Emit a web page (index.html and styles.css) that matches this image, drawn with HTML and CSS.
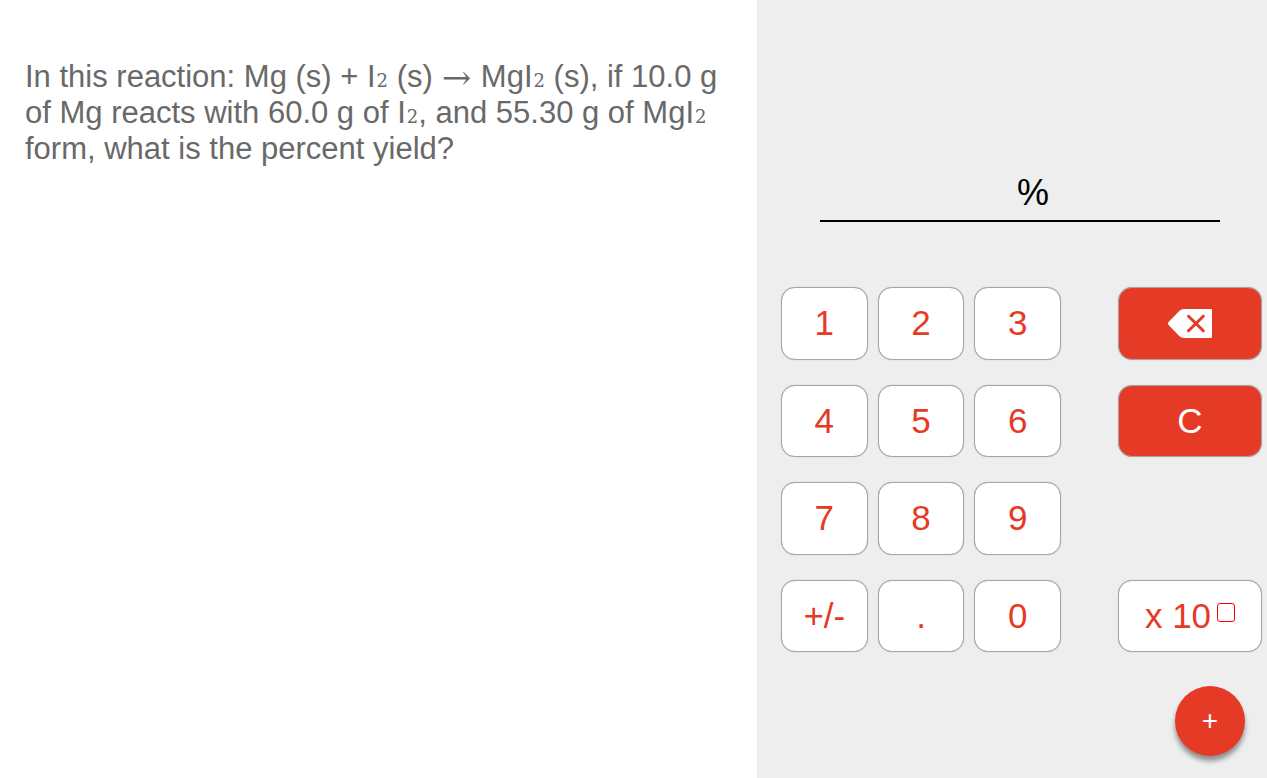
FILE: index.html
```html
<!DOCTYPE html>
<html lang="en">
<head>
    <meta charset="UTF-8">
    <meta name="viewport" content="width=device-width, initial-scale=1.0">
    <title>Percent Yield</title>
    <link rel="stylesheet" href="styles.css">
</head>
<body>
    <main class="question-pane">
        <p class="question" id="question">In this reaction: Mg (s) + I<span class="sub">2</span> (s) <span class="arrow">→</span> MgI<span class="sub">2</span> (s), if 10.0 g of Mg reacts with 60.0 g of I<span class="sub">2</span>, and 55.30 g of MgI<span class="sub">2</span> form, what is the percent yield?</p>
    </main>

    <aside class="answer-pane">
        <div class="answer">
            <input class="answer-input" id="answer" type="text" aria-labelledby="question">
            <label class="answer-unit" for="answer">%</label>
        </div>

        <div class="keypad">
            <div class="keys digits">
                <button class="key">1</button>
                <button class="key">2</button>
                <button class="key">3</button>
                <button class="key">4</button>
                <button class="key">5</button>
                <button class="key">6</button>
                <button class="key">7</button>
                <button class="key">8</button>
                <button class="key">9</button>
                <button class="key">+/-</button>
                <button class="key">.</button>
                <button class="key">0</button>
            </div>
            <div class="keys actions">
                <button class="key key-red" aria-label="Backspace">
                    <svg width="44" height="29" viewBox="0 0 44 29">
                        <path d="M0.5 13 L11.5 1.8 Q13.5 0 16 0 H43 Q44 0 44 1 V28 Q44 29 43 29 H16 Q13.5 29 11.5 27.2 L0.5 16 Q-0.5 14.5 0.5 13 Z" fill="#fff"/>
                        <path d="M20.5 7.2 L35.3 21.8 M35.3 7.2 L20.5 21.8" stroke="#e53a26" stroke-width="3" stroke-linecap="round"/>
                    </svg>
                </button>
                <button class="key key-red">C</button>
                <button class="key key-exp">x 10<span class="exp-box"></span></button>
            </div>
        </div>

        <button class="fab" aria-label="More">+</button>
    </aside>
</body>
</html>
```

FILE: styles.css
```css
* {
    box-sizing: border-box;
}
body {
    display: flex;
    min-height: 100vh;
    margin: 0;
    font-family: "Liberation Sans", Arial, sans-serif;
    background: #fff;
}

.question-pane {
    flex: 1;
    padding: 59px 25px;
}
.question {
    margin: 0;
    font-size: 31px;
    line-height: 36px;
    color: #696969;
}
.sub,
.arrow {
    font-family: "DejaVu Math TeX Gyre", "Liberation Serif", serif;
    line-height: 1;
}
.sub {
    padding-left: 1px;
    font-size: 18px;
}

.answer-pane {
    position: relative;
    flex: 0 0 510px;
    padding: 162px 5px 0 24px;
    background: #eee;
}
.answer {
    display: flex;
    align-items: center;
    height: 60px;
    margin: 0 42px 0 39px;
    padding-top: 4px;
    border-bottom: 2px solid #000;
    font-size: 36px;
}
.answer-input {
    width: 197px;
    padding: 0;
    border: 0;
    background: none;
    font: inherit;
    text-align: right;
    outline: none;
}

.keypad {
    display: flex;
    justify-content: space-between;
    height: 365px;
    margin-top: 65px;
}
.keys {
    display: grid;
    grid-template-rows: repeat(4, 1fr);
    gap: 25px 10px;
}
.digits {
    grid-template-columns: repeat(3, 1fr);
    width: 280px;
}
.actions {
    width: 144px;
}
.key {
    display: flex;
    align-items: center;
    justify-content: center;
    padding: 0;
    border: 1px solid #a6a6a6;
    border-radius: 14px;
    background: #fff;
    color: #e53a26;
    font-family: inherit;
    font-size: 35px;
    box-shadow: 0 0 1px #a6a6a6;
    cursor: pointer;
}
.key-red {
    background: #e53a26;
    color: #fff;
}
.key-exp {
    grid-row: 4;
}
.exp-box {
    width: 18px;
    height: 19px;
    margin: 0 0 7px 6px;
    border: 1px solid #f00;
    border-radius: 3px;
}

/* floating button, bottom right */
.fab {
    position: absolute;
    right: 22px;
    bottom: 22px;
    width: 70px;
    height: 70px;
    padding: 0;
    border: 0;
    border-radius: 50%;
    background: #e53a26;
    color: #fff;
    font-family: inherit;
    font-size: 28px;
    box-shadow: 0 5px 5px rgba(0,0,0,0.4);
    cursor: pointer;
}
```
